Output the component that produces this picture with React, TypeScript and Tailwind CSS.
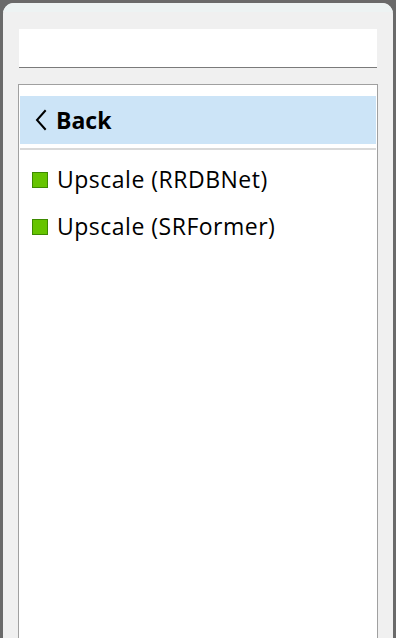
import React from "react";

function Chevron() {
  return (
    <svg width="14" height="22" viewBox="0 0 14 22" fill="none">
      <path d="M11 2 L3 11 L11 20" stroke="#000" strokeWidth="2" strokeLinecap="square" strokeLinejoin="miter" />
    </svg>
  );
}

function Item({ label }: { label: string }) {
  return (
    <div className="flex items-center h-[47px] pl-[12px]">
      <div className="w-[16px] h-[16px] bg-[#66c400] border border-[#3d8a00] mr-[9px] shrink-0" />
      <span className="text-[23px] leading-none tracking-[0.5px] text-black">{label}</span>
    </div>
  );
}

export default function App() {
  return (
    <div
      className="w-[396px] h-[638px] bg-[#6a6a6a] overflow-hidden"
      style={{ fontFamily: '"Open Sans", "Noto Sans", sans-serif' }}
    >
      <div className="ml-[3px] mt-[3px] w-[390px] h-[640px] rounded-t-[11px] bg-[#f0f0f0] overflow-hidden flex flex-col">
        <div className="h-[9px] bg-[#edf3f3] shrink-0" />
        <div className="px-[16px] pt-[17px] flex flex-col flex-1">
          <div className="h-[39px] bg-white border-b border-[#7a7a7a]" />
          <div className="mt-[16px] -ml-[1px] w-[360px] flex-1 bg-white border border-[#a0a0a0] pt-[11px] px-[1px]">
            <div className="h-[48px] bg-[#cce4f7] flex items-center pl-[14px]">
              <Chevron />
              <span className="ml-[8px] text-[23px] font-bold text-black leading-none">Back</span>
            </div>
            <div className="h-[4px]" />
            <div className="h-[2px] bg-[#d9d9d9]" />
            <div className="pt-[6px]">
              <Item label="Upscale (RRDBNet)" />
              <Item label="Upscale (SRFormer)" />
            </div>
          </div>
        </div>
      </div>
    </div>
  );
}
